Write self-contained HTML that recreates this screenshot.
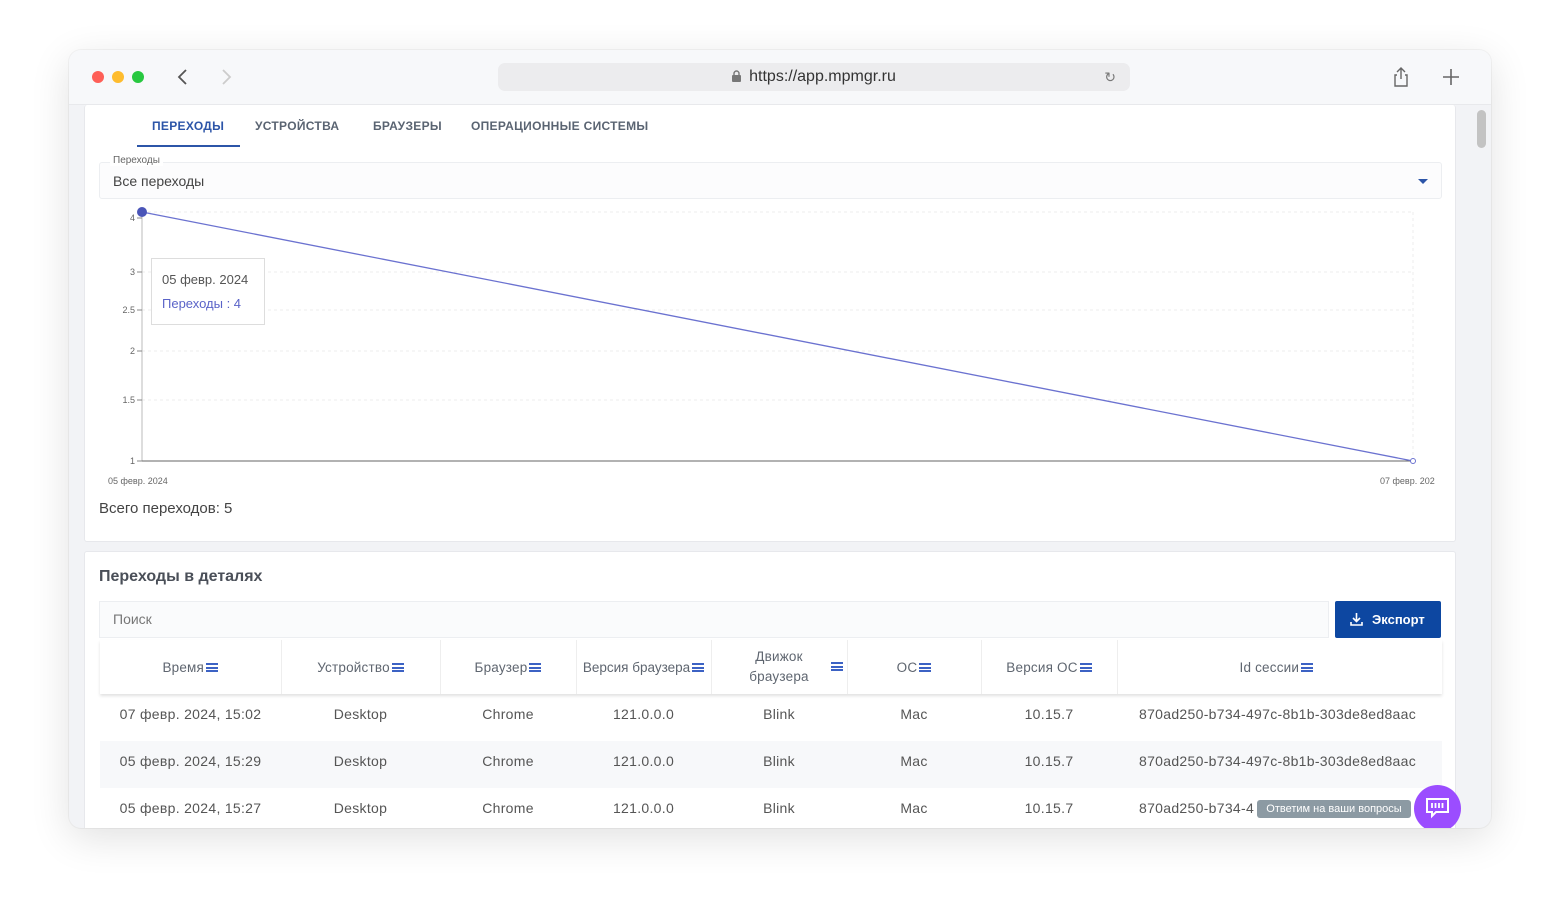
<!DOCTYPE html>
<html><head><meta charset="utf-8"><style>
*{box-sizing:border-box;margin:0;padding:0}
body{width:1560px;height:918px;background:#fff;font-family:"Liberation Sans",sans-serif;position:relative;overflow:hidden}
.win{position:absolute;left:69px;top:50px;width:1422px;height:778px;border-radius:12px;overflow:hidden;background:#f2f3f6;box-shadow:0 10px 40px rgba(0,0,0,.12),0 0 0 1px rgba(0,0,0,.04)}
.bar{position:absolute;left:0;top:0;width:1422px;height:55px;background:#f7f8fa;border-bottom:1px solid #e8e9ec}
.dot{position:absolute;top:21px;width:12px;height:12px;border-radius:50%}
.url{position:absolute;left:429px;top:13px;width:632px;height:28px;background:#ececee;border-radius:7px;text-align:center;font-size:16px;line-height:28px;color:#333}
.card{position:absolute;left:15px;width:1372px;background:#fff;border:1px solid #e7e8ec;border-radius:3px}
.tab{position:absolute;top:14px;font-size:12px;font-weight:bold;color:#5a6472;letter-spacing:.3px}
.ax{position:absolute;font-size:9px;color:#666}
table{border-collapse:collapse;position:absolute;left:15px;top:88px;width:1342px;font-size:13.5px;color:#555;table-layout:fixed}
th{font-weight:normal;height:54px;color:#5f6670;border-right:1px solid #eee;letter-spacing:.2px}
td{text-align:center;height:47px;line-height:41px;vertical-align:top;font-size:14px;letter-spacing:.3px}
tr.alt td{background:#f7f8fa}
.hm{display:inline-block;width:12px;height:9px;border-top:2px solid #3c62c4;border-bottom:2px solid #3c62c4;position:relative;vertical-align:middle;margin-left:2px}
.hm:after{content:"";position:absolute;left:0;right:0;top:1.5px;border-top:2px solid #3c62c4}
</style></head><body>
<div class="win">
<div class="bar">
<div class="dot" style="left:23px;background:#fe5f57"></div>
<div class="dot" style="left:43px;background:#febc2e"></div>
<div class="dot" style="left:63px;background:#28c840"></div>
<svg style="position:absolute;left:108px;top:18px" width="12" height="18"><path d="M9 2L2 9l7 7" stroke="#555" stroke-width="1.8" fill="none"/></svg>
<svg style="position:absolute;left:151px;top:18px" width="12" height="18"><path d="M3 2l7 7-7 7" stroke="#ccc" stroke-width="1.8" fill="none"/></svg>
<div class="url"><svg style="vertical-align:-1px;margin-right:8px" width="9" height="12"><rect x="0" y="5" width="9" height="7" rx="1" fill="#777"/><path d="M2 5V3.5a2.5 2.5 0 0 1 5 0V5" stroke="#777" stroke-width="1.4" fill="none"/></svg>https://app.mpmgr.ru<span style="position:absolute;right:14px;color:#777;font-size:14px">↻</span></div>
<svg style="position:absolute;left:1325px;top:17px" width="14" height="20"><path d="M7 1v11M3 5l4-4 4 4M3 8H1v11h12V8h-2" stroke="#666" stroke-width="1.4" fill="none"/></svg>
<svg style="position:absolute;left:1374px;top:19px" width="16" height="16"><path d="M8 0v16M0 8h16" stroke="#666" stroke-width="1.6"/></svg>
</div>
<div style="position:absolute;left:1408px;top:60px;width:9px;height:38px;border-radius:5px;background:#c3c3c3"></div>
<div class="card" style="top:55px;height:437px;border-top:none">
<div class="tab" style="left:67px;color:#2c55a8">ПЕРЕХОДЫ</div>
<div style="position:absolute;left:52px;top:40px;width:103px;height:2px;background:#2c55a8"></div>
<div class="tab" style="left:170px">УСТРОЙСТВА</div>
<div class="tab" style="left:288px">БРАУЗЕРЫ</div>
<div class="tab" style="left:386px">ОПЕРАЦИОННЫЕ СИСТЕМЫ</div>
<div style="position:absolute;left:14px;top:57px;width:1343px;height:37px;border:1px solid #eceef1;background:#fcfcfd;border-radius:3px"></div>
<div style="position:absolute;left:25px;top:50px;font-size:10px;color:#666;background:#fff;padding:0 3px">Переходы</div>
<div style="position:absolute;left:28px;top:68px;font-size:14px;color:#444">Все переходы</div>
<div style="position:absolute;left:1333px;top:74px;border-left:5px solid transparent;border-right:5px solid transparent;border-top:5px solid #2c55a8"></div>
<svg style="position:absolute;left:0;top:95px" width="1372" height="300">
<g stroke="#ececec" stroke-dasharray="3 3"><line x1="57" y1="12" x2="1328" y2="12"/><line x1="57" y1="72" x2="1328" y2="72"/><line x1="57" y1="110" x2="1328" y2="110"/><line x1="57" y1="151" x2="1328" y2="151"/><line x1="57" y1="200" x2="1328" y2="200"/><line x1="1328" y1="12" x2="1328" y2="261"/></g>
<line x1="57" y1="12" x2="57" y2="261" stroke="#bbb"/><line x1="57" y1="261" x2="1328" y2="261" stroke="#666"/>
<g stroke="#888"><line x1="52" y1="18" x2="57" y2="18"/><line x1="52" y1="72" x2="57" y2="72"/><line x1="52" y1="110" x2="57" y2="110"/><line x1="52" y1="151" x2="57" y2="151"/><line x1="52" y1="200" x2="57" y2="200"/><line x1="52" y1="261" x2="57" y2="261"/></g>
<line x1="57" y1="12" x2="1328" y2="261" stroke="#6b72d0" stroke-width="1.3"/>
<circle cx="57" cy="12" r="5" fill="#4a55b8"/><circle cx="1328" cy="261" r="2.5" fill="#fff" stroke="#6b72d0"/>
<g font-size="9" fill="#666" text-anchor="end" font-family="Liberation Sans"><text x="50" y="21">4</text><text x="50" y="75">3</text><text x="50" y="113">2.5</text><text x="50" y="154">2</text><text x="50" y="203">1.5</text><text x="50" y="264">1</text></g>
</svg>
<div style="position:absolute;left:66px;top:153px;width:114px;height:67px;background:#fff;border:1px solid #ddd;padding:9px 10px;font-size:13px;color:#555;line-height:24px">05 февр. 2024<br><span style="color:#5a63c8">Переходы : 4</span></div>
<div class="ax" style="left:23px;top:371px">05 февр. 2024</div>
<div class="ax" style="left:1295px;top:371px">07 февр. 202</div>
<div style="position:absolute;left:14px;top:395px;font-size:15px;color:#444">Всего переходов: 5</div>
</div>
<div class="card" style="top:501px;height:290px;border-bottom:none">
<div style="position:absolute;left:14px;top:16px;font-size:16px;font-weight:bold;color:#4a4f58">Переходы в деталях</div>
<div style="position:absolute;left:14px;top:49px;width:1230px;height:37px;border:1px solid #eceef1;background:#fafbfc;font-size:14px;color:#777;padding:9px 13px">Поиск</div>
<div style="position:absolute;left:1250px;top:49px;width:106px;height:37px;background:#0d47a1;border-radius:2px;color:#fff;font-size:13px;font-weight:bold;line-height:37px;padding-left:37px">Экспорт
<svg style="position:absolute;left:15px;top:12px" width="13" height="13"><path d="M6.5 0v8M3 5l3.5 3.5L10 5M1 9v3h11V9" stroke="#fff" stroke-width="1.6" fill="none"/></svg></div>
<table>
<colgroup><col style="width:181px"><col style="width:159px"><col style="width:136px"><col style="width:135px"><col style="width:136px"><col style="width:134px"><col style="width:136px"><col style="width:325px"></colgroup>
<tr style="box-shadow:0 2px 3px rgba(0,0,0,.12)"><th>Время<span class="hm"></span></th><th>Устройство<span class="hm"></span></th><th>Браузер<span class="hm"></span></th><th style="white-space:nowrap;letter-spacing:0">Версия браузера<span class="hm"></span></th><th style="line-height:20px;position:relative">Движок<br>браузера<span class="hm" style="position:absolute;right:4px;top:22px"></span></th><th>ОС<span class="hm"></span></th><th>Версия ОС<span class="hm"></span></th><th style="border:none;text-align:left;padding-left:122px">Id сессии<span class="hm"></span></th></tr>
<tr><td>07 февр. 2024, 15:02</td><td>Desktop</td><td>Chrome</td><td>121.0.0.0</td><td>Blink</td><td>Mac</td><td>10.15.7</td><td style="text-align:left;padding-left:22px">870ad250-b734-497c-8b1b-303de8ed8aac</td></tr>
<tr class="alt"><td>05 февр. 2024, 15:29</td><td>Desktop</td><td>Chrome</td><td>121.0.0.0</td><td>Blink</td><td>Mac</td><td>10.15.7</td><td style="text-align:left;padding-left:22px">870ad250-b734-497c-8b1b-303de8ed8aac</td></tr>
<tr><td>05 февр. 2024, 15:27</td><td>Desktop</td><td>Chrome</td><td>121.0.0.0</td><td>Blink</td><td>Mac</td><td>10.15.7</td><td style="text-align:left;padding-left:22px">870ad250-b734-4</td></tr>
</table>
</div>
<div style="position:absolute;left:1188px;top:750px;width:154px;height:18px;background:#8c9aa3;border-radius:3px;color:#fff;font-size:11px;line-height:18px;text-align:center">Ответим на ваши вопросы</div>
<div style="position:absolute;left:1345px;top:735px;width:47px;height:47px;border-radius:50%;background:#9b4dff"><svg width="47" height="47"><path d="M13 14h21v13H22l-4 4v-4h-5z" stroke="#fff" stroke-width="2" fill="none"/><path d="M18 18v5M21.5 18v5M25 18v5M28.5 18v5" stroke="#fff" stroke-width="1.8"/></svg></div>
</div>
</body></html>
